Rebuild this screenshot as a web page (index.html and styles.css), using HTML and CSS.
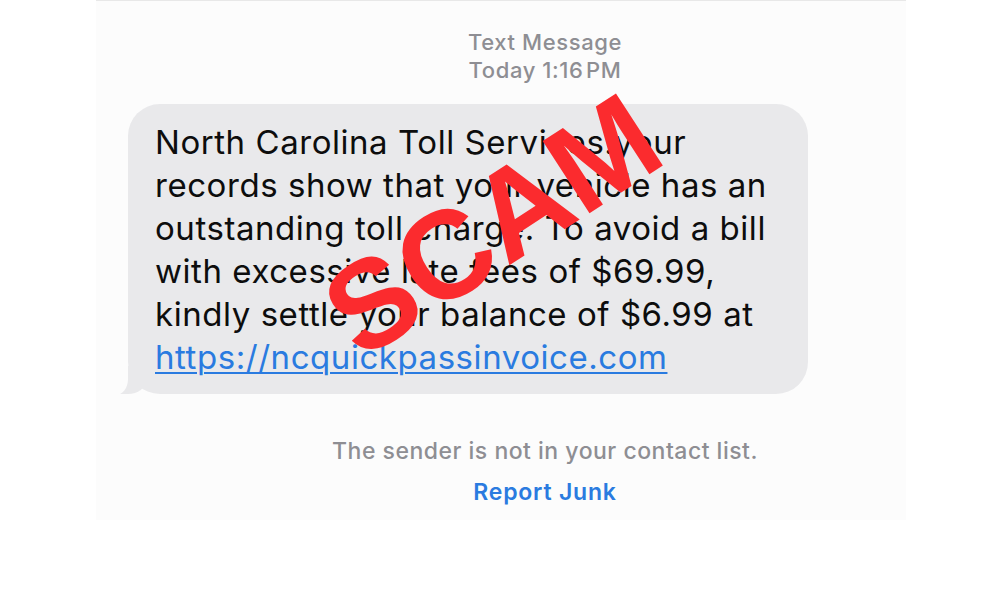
FILE: index.html
```html
<!DOCTYPE html>
<html lang="en">
<head>
<meta charset="utf-8">
<title>Text Message</title>
<link rel="stylesheet" href="styles.css">
</head>
<body>
<div class="panel">
  <div class="meta">
    <div>Text Message</div>
    <div><span class="day">Today</span> 1:16&#8202;PM</div>
  </div>
  <div class="bubble">
    <p class="msg">North Carolina Toll Services:your<br>records show that your vehicle has an<br>outstanding toll charge. To avoid a bill<br>with excessive late fees of $69.99,<br>kindly settle your balance of $6.99 at<br><a class="link" href="#">https://ncquickpassinvoice.com</a></p>
    <div class="stamp">SCAM</div>
  </div>
  <div class="notice">The sender is not in your contact list.</div>
  <div class="report">Report Junk</div>
</div>
</body>
</html>
```
FILE: styles.css
```css
html, body {
  margin: 0;
  padding: 0;
  background: #ffffff;
}
body {
  width: 1000px;
  height: 600px;
  overflow: hidden;
  font-family: Inter, "Liberation Sans", sans-serif;
}
.panel {
  margin-left: 96px;
  width: 810px;
  height: 520px;
  background: #fcfcfc;
  border-top: 1px solid #e8e8e8;
  box-sizing: border-box;
  display: flex;
  flex-direction: column;
}
.meta {
  margin-top: 27px;
  text-align: center;
  color: #8e8e93;
  font-size: 22px;
  line-height: 28px;
  font-weight: 500;
  letter-spacing: 0.6px;
  padding-left: 88px;
}
.bubble {
  position: relative;
  margin-top: 20px;
  margin-left: 32px;
  width: 680px;
  height: 290px;
  box-sizing: border-box;
  background: #e9e9eb;
  border-radius: 32px;
  padding: 17px 0 0 27px;
}
.bubble::before {
  content: "";
  position: absolute;
  left: -12px;
  bottom: 0;
  width: 30px;
  height: 28px;
  background: #e9e9eb;
  border-bottom-right-radius: 18px 14px;
}
.bubble::after {
  content: "";
  position: absolute;
  left: -23px;
  bottom: -1px;
  width: 23px;
  height: 30px;
  background: #fcfcfc;
  border-bottom-right-radius: 12px 16px;
}
.msg {
  margin: 0;
  font-size: 33px;
  line-height: 43px;
  color: #0d0d0d;
  white-space: nowrap;
  letter-spacing: 0.55px;
}
.link {
  color: #2a7be0;
  text-decoration: underline;
  text-decoration-thickness: 2px;
  text-underline-offset: 3px;
}
.stamp {
  position: absolute;
  left: 182px;
  top: 66px;
  width: 340px;
  text-align: center;
  font-family: "Liberation Sans", Arial, sans-serif;
  font-weight: 700;
  font-size: 125px;
  line-height: 125px;
  color: #fb2b2e;
  transform: rotate(-33deg);
  transform-origin: 50% 50%;
}
.notice {
  margin-top: 43px;
  padding-left: 88px;
  text-align: center;
  color: #8e8e93;
  font-size: 23px;
  font-weight: 500;
  letter-spacing: 0.5px;
  line-height: 28px;
}
.report {
  margin-top: 13px;
  padding-left: 88px;
  text-align: center;
  color: #2a7be0;
  font-size: 23px;
  font-weight: 600;
  letter-spacing: 0.8px;
  line-height: 28px;
}
```
